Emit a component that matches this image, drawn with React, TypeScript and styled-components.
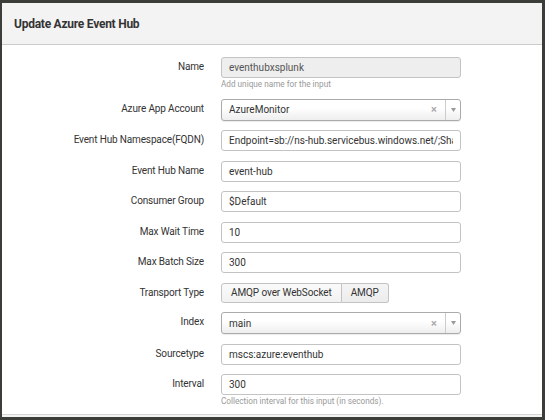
import styled, { createGlobalStyle } from "styled-components";

const GlobalStyle = createGlobalStyle`
  html, body {
    margin: 0;
    padding: 0;
    background: #3a3d38;
    height: 420px;
    overflow: hidden;
  }
  * {
    box-sizing: border-box;
  }
`;

type Field =
  | { kind: "text"; label: string; value: string; disabled?: boolean; help?: string }
  | { kind: "select"; label: string; value: string }
  | { kind: "toggle"; label: string; options: string[]; active: number };

const fields: Field[] = [
  { kind: "text", label: "Name", value: "eventhubxsplunk", disabled: true, help: "Add unique name for the input" },
  { kind: "select", label: "Azure App Account", value: "AzureMonitor" },
  { kind: "text", label: "Event Hub Namespace(FQDN)", value: "Endpoint=sb://ns-hub.servicebus.windows.net/;SharedAccessKeyName=RootManageSharedAccessKey" },
  { kind: "text", label: "Event Hub Name", value: "event-hub" },
  { kind: "text", label: "Consumer Group", value: "$Default" },
  { kind: "text", label: "Max Wait Time", value: "10" },
  { kind: "text", label: "Max Batch Size", value: "300" },
  { kind: "toggle", label: "Transport Type", options: ["AMQP over WebSocket", "AMQP"], active: 0 },
  { kind: "select", label: "Index", value: "main" },
  { kind: "text", label: "Sourcetype", value: "mscs:azure:eventhub" },
  { kind: "text", label: "Interval", value: "300", help: "Collection interval for this input (in seconds)." },
];

export default function App() {
  return (
    <>
      <GlobalStyle />
      <Modal>
        <Header>
          <Title>Update Azure Event Hub</Title>
        </Header>
        <Body>
          {fields.map((f) => (
            <Row key={f.label}>
              <Label>{f.label}</Label>
              <Control>
                {f.kind === "text" && (
                  <TextInput value={f.value} $disabled={f.disabled} readOnly />
                )}
                {f.kind === "select" && (
                  <Select>
                    <SelectValue>{f.value}</SelectValue>
                    <Clear>×</Clear>
                    <Caret>
                      <svg width="5" height="4" viewBox="0 0 5 4">
                        <path d="M0 0h5L2.5 4z" fill="#999" />
                      </svg>
                    </Caret>
                  </Select>
                )}
                {f.kind === "toggle" && (
                  <ButtonGroup>
                    {f.options.map((o, i) => (
                      <ToggleButton key={o} $active={i === f.active}>
                        {o}
                      </ToggleButton>
                    ))}
                  </ButtonGroup>
                )}
                {"help" in f && f.help && <Help>{f.help}</Help>}
              </Control>
            </Row>
          ))}
        </Body>
        <Footer />
      </Modal>
    </>
  );
}

const Modal = styled.div`
  margin: 3px 3px 0 2px;
  height: 414px;
  background: #fff;
  font-family: Roboto, "Liberation Sans", sans-serif;
  color: #333;
  display: flex;
  flex-direction: column;
`;

const Header = styled.div`
  height: 42px;
  background: #f3f3f3;
  border-bottom: 1px solid #cccccc;
  display: flex;
  align-items: center;
  padding: 0 0 0 12px;
`;

const Title = styled.h3`
  margin: 0;
  font-size: 12px;
  font-weight: 700;
  color: #333;
  letter-spacing: -0.25px;
`;

const Body = styled.div`
  flex: 1;
  padding-top: 12px;
  display: flex;
  flex-direction: column;
  gap: 9.5px;
`;

const Row = styled.div`
  display: grid;
  grid-template-columns: 202px 240px;
  column-gap: 17px;
  align-items: start;
`;

const Label = styled.div`
  text-align: right;
  font-size: 10px;
  letter-spacing: -0.15px;
  line-height: 20px;
  color: #333;
  white-space: nowrap;
`;

const Control = styled.div`
  display: flex;
  flex-direction: column;
`;

const TextInput = styled.input<{ $disabled?: boolean }>`
  width: 240px;
  height: 21px;
  border: 1px solid #c3c3c3;
  border-radius: 3px;
  padding: 0 7px;
  font-family: Roboto, "Liberation Sans", sans-serif;
  font-size: 10px;
  color: ${(p) => (p.$disabled ? "#555" : "#333")};
  background: ${(p) => (p.$disabled ? "#eeeeee" : "#fff")};
  outline: none;
`;

const Select = styled.div`
  width: 240px;
  height: 22px;
  border: 1px solid #aaa;
  border-radius: 3px;
  background: linear-gradient(#ffffff 40%, #eeeeee);
  box-shadow: 0 1px 1px rgba(0, 0, 0, 0.08);
  display: flex;
  align-items: center;
  font-size: 10px;
`;

const SelectValue = styled.span`
  flex: 1;
  padding-left: 7px;
  color: #333;
`;

const Clear = styled.span`
  width: 14px;
  text-align: center;
  font-size: 11px;
  font-weight: 700;
  color: #aaa;
  margin-right: 4px;
`;

const Caret = styled.span`
  width: 15px;
  height: 100%;
  border-left: 1px solid #ccc;
  display: flex;
  align-items: center;
  justify-content: center;
`;

const ButtonGroup = styled.div`
  display: flex;
`;

const ToggleButton = styled.div<{ $active?: boolean }>`
  height: 20px;
  padding: 0 9px;
  font-size: 10px;
  letter-spacing: -0.1px;
  line-height: 18px;
  color: #333;
  border: 1px solid #c3c3c3;
  background: ${(p) => (p.$active ? "linear-gradient(#fafafa, #f2f2f2)" : "linear-gradient(#f4f4f4, #ececec)")};
  &:first-child {
    border-radius: 3px 0 0 3px;
  }
  &:last-child {
    border-radius: 0 3px 3px 0;
    border-left: none;
  }
`;

const Help = styled.div`
  margin-top: 1.5px;
  font-size: 8.2px;
  line-height: 9.5px;
  color: #999;
`;

const Footer = styled.div`
  height: 3px;
  border-top: 1px solid #d6d6d6;
  background: #f3f3f3;
`;
